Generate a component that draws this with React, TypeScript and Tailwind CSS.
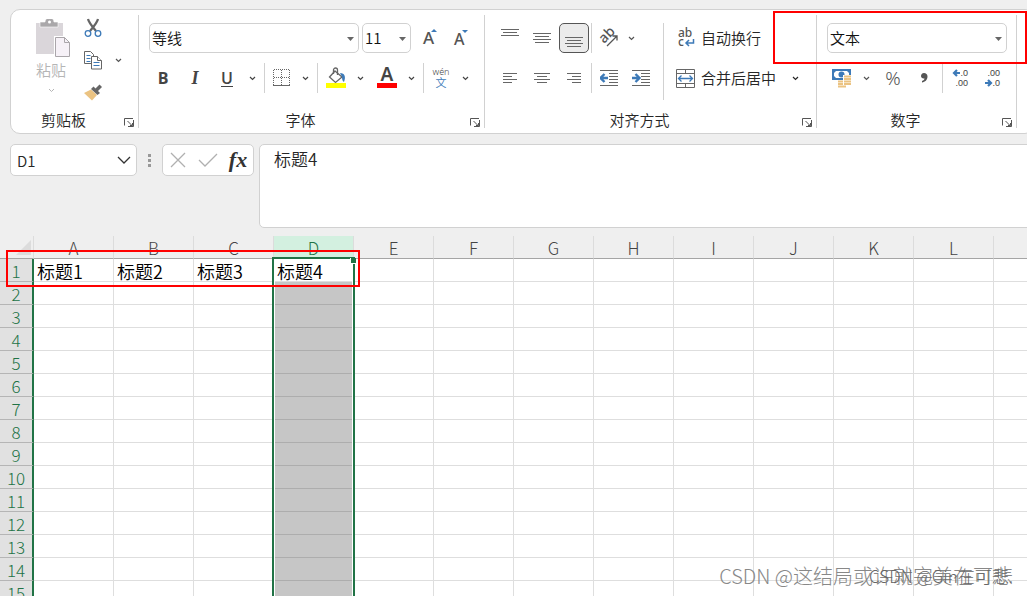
import type { ReactNode } from "react";

const columns = ["A", "B", "C", "D", "E", "F", "G", "H", "I", "J", "K", "L", "M"];
const rows = Array.from({ length: 15 }, (_, i) => i + 1);
const titles = ["标题1", "标题2", "标题3", "标题4"];

const Chevron = ({ label, className = "w-[18px]" }: { label: string; className?: string }) => (
  <button aria-label={label} className={`flex h-[30px] shrink-0 items-center justify-center ${className}`}>
    <svg width="7" height="5" viewBox="0 0 7 5" fill="none" stroke="currentColor" strokeWidth="1.2">
      <path d="M1 1l2.5 2.5L6 1" />
    </svg>
  </button>
);

const Divider = ({ className = "mx-[3px]" }: { className?: string }) => (
  <div className={`h-[30px] w-px shrink-0 bg-[#d1d1d1] ${className}`} />
);

const Tool = ({ label, className = "w-[30px]", children }: { label: string; className?: string; children: ReactNode }) => (
  <button
    aria-label={label}
    title={label}
    className={`flex h-[30px] shrink-0 items-center justify-center ${className}`}
  >
    {children}
  </button>
);

const Group = ({ title, className, children }: { title: string; className: string; children: ReactNode }) => (
  <section className={`relative flex shrink-0 flex-col border-r border-[#d1d1d1] pt-2 ${className}`}>
    {children}
    <div className="mt-auto flex h-4 items-center justify-center pr-[22px] text-[15px] leading-4 text-[#262626]">
      {title}
    </div>
    <button aria-label={`${title}设置`} className="absolute right-1 bottom-px">
      <svg width="10" height="10" viewBox="0 0 10 10" fill="none" stroke="#555" strokeWidth="1">
        <path d="M.5 8.5V1.5H9M3.5 4l4.5 4.500M9.500 3v6.500H4M8.500 6v2.500H6" />
      </svg>
    </button>
  </section>
);

const Dropdown = ({ label, value, className }: { label: string; value: string; className: string }) => (
  <div className={`relative h-[30px] shrink-0 ${className}`}>
    <select
      aria-label={label}
      className="h-full w-full appearance-none rounded-[5px] border border-[#d1d1d1] bg-white pl-0.5 text-[15px] text-[#111]"
    >
      <option>{value}</option>
    </select>
    <svg className="pointer-events-none absolute top-3.5 right-[5px]" width="7" height="4" viewBox="0 0 7 4">
      <path d="M0 0h7L3.5 4z" fill="#666" />
    </svg>
  </div>
);

// each line is [x, y, length]
const Lines = ({ lines }: { lines: number[][] }) => (
  <svg width="20" height="20" viewBox="0 0 20 20" stroke="#666" strokeWidth="1">
    {lines.map(([x, y, length]) => (
      <path key={y} d={`M${x} ${y + 0.5}h${length}`} />
    ))}
  </svg>
);

const IndentIcon = ({ right = false }: { right?: boolean }) => (
  <svg width="18" height="18" viewBox="0 0 18 18" fill="none">
    <path d="M0 1.5h18M9 4.5h9M9 7.5h9M9 10.5h9M9 13.5h9M0 16.5h18" stroke="#666" />
    <path d={right ? "M0 9h7M3.5 5L7.500 9l-4 4" : "M8 9H1M4.500 5L.5 9l4 4"} stroke="#3d7ab8" strokeWidth="2.4" />
  </svg>
);

const DecimalIcon = ({ more = false }: { more?: boolean }) => (
  <svg className="overflow-visible" width="18" height="20" viewBox="0 0 18 20" fill="#444" fontFamily="Liberation Sans" fontSize="9">
    <text x="16" y="8" textAnchor="end">{more ? ".0" : ".00"}</text>
    <text x="16" y="18" textAnchor="end">{more ? ".00" : ".0"}</text>
    {more ? (
      <path d="M8 5H2.500M5 2L2 5l3 3" fill="none" stroke="#3d7ab8" strokeWidth="2.2" />
    ) : (
      <path d="M1 15h5.500M4 12l3 3-3 3" fill="none" stroke="#3d7ab8" strokeWidth="2.2" />
    )}
  </svg>
);

const ClipboardGroup = () => (
  <Group title="剪贴板" className="w-32">
    <div className="flex">
      <button className="ml-5 flex w-10 flex-col items-center text-[#b5b5b5]">
        <svg className="-mt-1 ml-1" width="36" height="39" viewBox="0 0 36 39">
          <path d="M1 4h27v31H1z" fill="#dad6da" />
          <path d="M5 8V3h5a4.500 4.500 0 0 1 9 0h4v5z" fill="#aaa8aa" stroke="#fff" strokeWidth=".6" />
          <circle cx="14.5" cy="3" r="1.500" fill="#fff" />
          <path d="M19 17h12l5 5v17H19z" fill="#fff" />
          <path d="M20.500 18.500h9l5 5v14h-14z" fill="#f6f1f7" stroke="#aaa6aa" />
          <path d="M29.500 18.500v5h5" fill="none" stroke="#aaa6aa" />
        </svg>
        <span className="text-[15px] leading-6 whitespace-nowrap">粘贴</span>
        <svg className="mt-1.5" width="7" height="5" viewBox="0 0 7 5" fill="none" stroke="currentColor">
          <path d="M1 1l2.500 2.500L6 1" />
        </svg>
      </button>
      <div className="-mt-2.5 ml-2.5 flex flex-col gap-0.5 text-[#555]">
        <Tool label="剪切" className="w-6">
          <svg width="18" height="20" viewBox="0 0 18 20" fill="none">
            <path d="M4 1c.5 3 2 5 8 12M14 1c-.5 3-2 5-8 12" stroke="#666" strokeWidth="2.2" />
            <circle cx="4" cy="15.500" r="2.800" stroke="#3d7ab8" strokeWidth="1.300" />
            <circle cx="14" cy="15.500" r="2.800" stroke="#3d7ab8" strokeWidth="1.300" />
          </svg>
        </Tool>
        <div className="flex">
          <Tool label="复制" className="w-6">
            <svg width="18" height="19" viewBox="0 0 18 19" fill="#fff">
              <path d="M.5 12.500V.5h6l3 3v9z" stroke="#666" />
              <path d="M2.500 4.500h4M2.500 7.500h4M2.500 10.500h4" stroke="#3d7ab8" />
              <path d="M7.500 18V5.500h6l4 4V18z" stroke="#666" />
              <path d="M13.500 5.500v4h4" stroke="#666" />
              <path d="M9.500 11.500h6M9.500 14.500h6" stroke="#3d7ab8" />
            </svg>
          </Tool>
          <Chevron label="复制选项" className="ml-1 w-[18px]" />
        </div>
        <Tool label="格式刷" className="w-6">
          <svg width="18" height="17" viewBox="0 0 18 17">
            <path d="M0 9l7-3.500L13 11l-5 5.500z" fill="#ebc382" />
            <path d="M7 5l2.500-2.500 6.500 6.500-2.500 2z" fill="#666" />
            <path d="M11 5l4.500-4.500L18 3l-4.500 4.500z" fill="#666" />
          </svg>
        </Tool>
      </div>
    </div>
  </Group>
);

const FontGroup = () => (
  <Group title="字体" className="w-[346px]">
    <div className="flex pl-2.5">
      <Dropdown label="字体" value="等线" className="w-[210px]" />
      <Dropdown label="字号" value="11" className="ml-[3px] w-[49px]" />
      <Tool label="增大字号" className="ml-1 w-[30px]">
        <svg className="overflow-visible" width="18" height="20" viewBox="0 0 18 20" fill="#555" fontFamily="Noto Sans" fontSize="17" fontWeight="500">
          <text x="2" y="16">A</text>
          <path d="M10 4l3-3 3 3z" fill="#3d7ab8" />
        </svg>
      </Tool>
      <Tool label="减小字号" className="ml-px w-[30px]">
        <svg className="overflow-visible" width="18" height="20" viewBox="0 0 18 20" fill="#555" fontFamily="Noto Sans" fontSize="16" fontWeight="500">
          <text x="2" y="17">A</text>
          <path d="M10 2l3 3 3-3z" fill="#3d7ab8" />
        </svg>
      </Tool>
    </div>
    <div className="mt-2.5 flex pl-2 text-base text-[#444]">
      <Tool label="加粗" className="w-8">
        <b className="font-['Open_Sans']">B</b>
      </Tool>
      <Tool label="倾斜" className="w-8">
        <i className="font-['Liberation_Serif'] text-lg font-bold">I</i>
      </Tool>
      <Tool label="下划线" className="w-8">
        <span className="border-b border-[#444] font-['Open_Sans'] text-base leading-4 font-semibold">U</span>
      </Tool>
      <Chevron label="下划线选项" />
      <Divider />
      <Tool label="边框" className="w-7">
        <svg width="18" height="18" viewBox="0 0 18 18" fill="none" stroke="#666">
          <path d="M.5 16V.5h16V16M8.500 1v15M1 8.500h15" strokeDasharray="1 1" />
          <path d="M0 16.500h17" />
        </svg>
      </Tool>
      <Chevron label="边框选项" />
      <Divider />
      <Tool label="填充颜色">
        <svg width="20" height="22" viewBox="0 0 20 22" fill="none">
          <path d="M9 4l7 6-6.500 5.500L3.500 10z" stroke="#666" strokeWidth="1.300" />
          <path d="M7.500 7V3a2 2 0 0 1 4 0v5" stroke="#666" strokeWidth="1.300" />
          <path d="M14 6c5 0 6 4 4 9-2-1-2-4-2-5z" fill="#3d7ab8" />
          <path d="M0 16h20v5H0z" fill="#ff0" />
        </svg>
      </Tool>
      <Chevron label="填充选项" />
      <Tool label="字体颜色" className="ml-[3px] w-[30px]">
        <svg className="overflow-visible" width="20" height="22" viewBox="0 0 20 22">
          <text x="10" y="14" textAnchor="middle" fill="#444" fontFamily="Noto Sans" fontSize="19" fontWeight="600">A</text>
          <path d="M0 16h20v5H0z" fill="red" />
        </svg>
      </Tool>
      <Chevron label="字体颜色选项" />
      <Divider />
      <Tool label="拼音" className="w-7">
        <span className="flex flex-col items-center">
          <span className="font-['Noto_Sans'] text-[9px] leading-2">wén</span>
          <span className="text-[11px] leading-3 text-[#3d7ab8]">文</span>
        </span>
      </Tool>
      <Chevron label="拼音选项" className="w-5" />
    </div>
  </Group>
);

const AlignGroup = () => (
  <Group title="对齐方式" className="w-[332px]">
    <div className="flex pl-2.5">
      <div>
        <div className="flex gap-0.5">
          <Tool label="顶端对齐">
            <Lines lines={[[1, 1, 18], [3, 4, 14], [1, 7, 18]]} />
          </Tool>
          <Tool label="垂直居中">
            <Lines lines={[[1, 5, 18], [3, 8, 14], [1, 11, 18], [3, 14, 14]]} />
          </Tool>
          <Tool label="底端对齐" className="w-[30px] rounded-[5px] border border-[#555] bg-[#ebebeb]">
            <Lines lines={[[1, 9, 18], [3, 12, 14], [1, 15, 18], [3, 18, 14]]} />
          </Tool>
          <Divider className="" />
          <Tool label="方向">
            <svg className="overflow-visible" width="20" height="20" viewBox="0 0 20 20">
              <text x="5" y="16" transform="rotate(-45 5 16)" fill="#555" fontFamily="Noto Sans" fontSize="14" fontWeight="500">ab</text>
              <path d="M8 18L18 8M13.500 8H18v4.500" fill="none" stroke="#555" strokeWidth="1.300" />
            </svg>
          </Tool>
          <Chevron label="方向选项" className="w-2.5" />
        </div>
        <div className="mt-2.5 flex gap-0.5">
          <Tool label="左对齐">
            <Lines lines={[[3, 5, 14], [3, 8, 9], [3, 11, 14], [3, 14, 9]]} />
          </Tool>
          <Tool label="居中">
            <Lines lines={[[2, 5, 16], [5, 8, 10], [2, 11, 16], [5, 14, 10]]} />
          </Tool>
          <Tool label="右对齐">
            <Lines lines={[[3, 5, 14], [8, 8, 9], [3, 11, 14], [8, 14, 9]]} />
          </Tool>
          <Divider className="" />
          <Tool label="减少缩进量">
            <IndentIcon />
          </Tool>
          <Tool label="增加缩进量">
            <IndentIcon right />
          </Tool>
        </div>
      </div>
      <div className="ml-[7px] h-[77px] w-px bg-[#d1d1d1]" />
      <div className="ml-3 flex flex-col gap-2.5 text-[15px] text-[#262626]">
        <button className="flex h-[30px] items-center gap-1.5">
          <svg className="overflow-visible" width="19" height="20" viewBox="0 0 19 20" fill="#555" fontFamily="Noto Sans" fontSize="12" fontWeight="500">
            <text x="2" y="9">ab</text>
            <text x="2" y="18">c</text>
            <path d="M17.500 11v4H10M13 12l-3 3 3 3" fill="none" stroke="#3d7ab8" strokeWidth="1.500" />
          </svg>
          自动换行
        </button>
        <div className="flex">
          <button className="flex h-[30px] items-center gap-1.5">
            <svg width="19" height="19" viewBox="0 0 19 19" fill="none" stroke="#666">
              <path d="M.5.500h18v18H.5zM.5 4.500h18M.5 14.500h18M9.500 0v4.500M9.500 14.500V19" />
              <path d="M3 9.500h13M5.500 6.500l-3 3 3 3M13.500 6.500l3 3-3 3" stroke="#3d7ab8" strokeWidth="1.300" />
            </svg>
            合并后居中
          </button>
          <Chevron label="合并选项" className="ml-2.5 w-[18px]" />
        </div>
      </div>
    </div>
  </Group>
);

const NumberGroup = () => (
  <Group title="数字" className="w-[200px]">
    <div className="flex pl-2.5">
      <Dropdown label="数字格式" value="文本" className="w-[180px]" />
    </div>
    <div className="mt-2.5 flex pl-2.5 text-[#555]">
      <Tool label="会计数字格式">
        <svg width="20" height="20" viewBox="0 0 20 20">
          <path d="M0 1h19v11H0z" fill="#3d7ab8" />
          <path d="M4 3h11l2 2v3l-2 2H4L2 8V5z" fill="#fff" />
          <circle cx="9.500" cy="6.500" r="3" fill="#3d7ab8" />
          <path d="M11 7h8v12h-8zM5 12h8v8H5z" fill="#fff" />
          <path d="M12 8.500h7M12 11h7M12 13.500h7M12 16h7M6 13.500h5M6 16h5M6 18.500h8" stroke="#ebc382" strokeWidth="1.900" />
        </svg>
      </Tool>
      <Chevron label="会计格式选项" />
      <Tool label="百分比样式" className="ml-[3px] w-[30px]">
        <span className="font-['Noto_Sans'] text-[19px]">%</span>
      </Tool>
      <Tool label="千位分隔样式" className="ml-px w-[30px]">
        <svg width="8" height="12" viewBox="0 0 8 12" fill="#555">
          <path d="M4 1c2 0 3.500 1.500 3.500 3.500C7.500 8 5 10 2 10.500V9c1.500-.5 2.500-1.500 2.500-2.500C2.500 7 1 5.500 1 4s1-3 3-3z" />
        </svg>
      </Tool>
      <Divider />
      <Tool label="增加小数位数">
        <DecimalIcon more />
      </Tool>
      <Tool label="减少小数位数" className="ml-0.5 w-[30px]">
        <DecimalIcon />
      </Tool>
    </div>
  </Group>
);

const FormulaBar = () => (
  <div className="flex items-start pt-2.5 pl-2.5">
    <div className="relative h-8 w-[127px] shrink-0">
      <input
        aria-label="名称框"
        defaultValue="D1"
        className="h-full w-full rounded-[5px] border border-[#d1d1d1] bg-white pl-1.5 text-[15px] text-[#262626]"
      />
      <svg className="absolute top-3 right-1.5" width="14" height="8" viewBox="0 0 14 8" fill="none" stroke="#333" strokeWidth="1.300">
        <path d="M1 1l6 6 6-6" />
      </svg>
    </div>
    <div className="flex h-8 w-[25px] shrink-0 flex-col items-center justify-center gap-0.5">
      <span className="size-[3px] bg-[#999]" />
      <span className="size-[3px] bg-[#999]" />
      <span className="size-[3px] bg-[#999]" />
    </div>
    <div className="flex h-8 w-[92px] shrink-0 items-center rounded-[5px] border border-[#d1d1d1] bg-white">
      <Tool label="取消">
        <svg width="16" height="16" viewBox="0 0 16 16" stroke="#b0b0b0" strokeWidth="1.300">
          <path d="M1 1l14 14M15 1L1 15" />
        </svg>
      </Tool>
      <Tool label="输入">
        <svg width="20" height="14" viewBox="0 0 20 14" fill="none" stroke="#b0b0b0" strokeWidth="1.300">
          <path d="M1 7l6 6L19 1" />
        </svg>
      </Tool>
      <Tool label="插入函数">
        <i className="font-['Liberation_Serif'] text-[22px] leading-6 font-bold text-[#333]">fx</i>
      </Tool>
    </div>
    <textarea
      aria-label="编辑栏"
      defaultValue="标题4"
      className="-mr-2 ml-[5px] h-[84px] flex-1 resize-none rounded-[5px] border border-[#d1d1d1] bg-white px-3.5 py-0.5 text-[17px] leading-6 text-[#262626]"
    />
  </div>
);

const Sheet = () => (
  <div className="relative mt-2 min-h-0 flex-1">
    <div className="h-full overflow-hidden">
      <table className="w-[1074px] table-fixed border-separate border-spacing-0 bg-white">
        <thead className="bg-[#efefef] text-[17px] leading-[22px] text-[#444]">
          <tr className="h-[23px]">
            <th className="w-[34px] border-r border-b border-r-[#dcdcdc] border-b-[#a5a5a5] p-0" aria-label="全选">
              <svg className="ml-4" width="15" height="15" viewBox="0 0 15 15" fill="#dcdcdc">
                <path d="M15 0v15H0z" />
              </svg>
            </th>
            {columns.map((column) => (
              <th
                key={column}
                className={`w-20 border-r border-b border-r-[#dcdcdc] border-b-[#a5a5a5] p-0 pt-0.5 leading-5 font-light ${
                  column === "D" ? "bg-[#d3f0e0] text-[#217346]" : ""
                }`}
              >
                {column}
              </th>
            ))}
          </tr>
        </thead>
        <tbody className="text-[18px] leading-5 text-black">
          {rows.map((row) => (
            <tr key={row} className="h-[23px]">
              <th className="border-r-2 border-b border-r-[#217346] border-b-[#b5b5b5] bg-[#e1e1e1] p-0 pt-0.5 text-[17px] font-light text-[#217346]">
                {row}
              </th>
              {columns.map((column, i) => (
                <td
                  key={column}
                  className={`border-r border-b p-0 pt-0.5 pl-[3px] ${
                    column === "D" && row > 1 ? "border-[#adadad] bg-[#c6c6c6]" : "border-[#dedede]"
                  }`}
                >
                  {row === 1 ? titles[i] : ""}
                </td>
              ))}
            </tr>
          ))}
        </tbody>
      </table>
    </div>
    {/* selected column outline */}
    <div className="pointer-events-none absolute top-[21px] -bottom-1 left-[272px] w-[83px] border-2 border-[#217346]">
      <div className="h-full border-x border-white" />
      <div className="absolute -top-px -right-[3px] size-[6px] border-b border-l border-white bg-[#217346]" />
    </div>
    <div className="pointer-events-none absolute top-3.5 left-1.5 h-[37px] w-[354px] border-2 border-[#f00]" />
  </div>
);

const App = () => {
  return (
    <main className="relative flex h-screen flex-col overflow-hidden bg-[#efefef] font-['Noto_Sans_CJK_SC',sans-serif] font-[350]">
      <div className="mt-[9px] -mr-2 ml-2.5 flex h-[125px] shrink-0 rounded-[10px] border border-[#d1d1d1] bg-white py-[5px] text-[#555]">
        <ClipboardGroup />
        <FontGroup />
        <AlignGroup />
        <NumberGroup />
      </div>
      <FormulaBar />
      <Sheet />
      <div className="pointer-events-none absolute top-[11px] right-0 h-[53px] w-[254px] border-2 border-[#f00]" />
      <div className="pointer-events-none absolute right-3.5 bottom-1 text-right whitespace-nowrap text-[#888]">
        <p className="text-xl leading-8 font-light">CSDN @这结局或许就完美在可悲</p>
        <p className="absolute right-0 bottom-0 text-[17px] leading-8 font-light text-[#666]">CSDN @Gin在可悲.</p>
      </div>
    </main>
  );
};

export default App;
